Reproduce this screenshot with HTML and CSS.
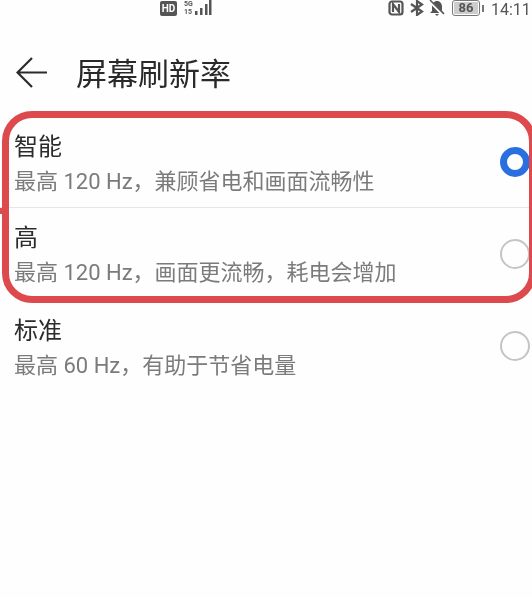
FILE: index.html
```html
<html lang="zh-CN">
  <head>
    <meta charset="UTF-8" />
    <meta name="viewport" content="width=device-width, initial-scale=1.0" />
    <title>屏幕刷新率</title>
    <link rel="stylesheet" href="styles.css">
  </head>

  <body>
    <div class="base">
      <div class="statusBar">
        <div class="statusLeft">
          <span class="hdBadge">HD</span>
          <svg class="signal" width="30" height="16" viewBox="0 0 30 16">
            <text x="2" y="6" class="signalText">5G</text>
            <text x="2" y="14" class="signalText">15</text>
            <rect x="13" y="11" width="2.500" height="4" />
            <rect x="18" y="8" width="2.500" height="7" />
            <rect x="23" y="4" width="2.500" height="11" />
            <rect x="27" y="0" width="2.500" height="15" />
          </svg>
        </div>
        <div class="statusRight">
          <svg class="statusIcon iconNfc" width="16" height="16" viewBox="0 0 16 16">
            <rect x="1.500" y="1.500" width="13" height="13" rx="2.500" fill="none" stroke="#555" stroke-width="2.200" />
            <path d="M5 12V4l6 8V4" fill="none" stroke="#555" stroke-width="2.200" />
          </svg>
          <svg class="statusIcon iconBluetooth" width="14" height="16" viewBox="0 0 14 16">
            <path d="M1 4l11 7.500-5 3.500V1l5 3.500L1 12" fill="none" stroke="#555" stroke-width="2.200" />
          </svg>
          <svg class="statusIcon iconBell" width="18" height="16" viewBox="0 0 18 16">
            <path d="M9 1C6 1 4 3.500 4 6.500V11l-2 2h14l-2-2V6.500C14 3.500 12 1 9 1z" fill="#555" />
            <path d="M7 14h4l-2 2z" fill="#555" />
            <path d="M2 1.500l14 14" stroke="#fff" stroke-width="3" />
            <path d="M2 0l14 14" stroke="#555" stroke-width="1.500" />
          </svg>
          <span class="battery"><span class="batteryLevel">86</span></span>
          <span class="batteryTip"></span>
          <span class="clock">14:11</span>
        </div>
      </div>

      <div class="header">
        <svg class="backIcon" width="32" height="32" viewBox="0 0 32 32">
          <path d="M16 1L1.500 15.500 16 30M1.500 15.500H31" fill="none" stroke="#2b2b2b" stroke-width="2.200" />
        </svg>
        <div class="headerTitle">屏幕刷新率</div>
      </div>

      <div class="list">
        <div class="row rowLine">
          <div class="rowText">
            <div class="rowTitle">智能</div>
            <div class="rowDesc">最高 120 Hz，兼顾省电和画面流畅性</div>
          </div>
          <span class="radio radioOn"></span>
        </div>
        <div class="row">
          <div class="rowText">
            <div class="rowTitle">高</div>
            <div class="rowDesc">最高 120 Hz，画面更流畅，耗电会增加</div>
          </div>
          <span class="radio"></span>
        </div>
        <div class="row rowLast">
          <div class="rowText">
            <div class="rowTitle">标准</div>
            <div class="rowDesc">最高 60 Hz，有助于节省电量</div>
          </div>
          <span class="radio"></span>
        </div>
        <div class="highlight"></div>
        <div class="highlightBump"></div>
      </div>
    </div>
  </body>
</html>
```

FILE: styles.css
```css
html,
body {
  margin: 0;
  height: 100%;
  overflow: hidden;
  background-color: #fefefe;
}

.base {
  position: relative;
  width: 532px;
  height: 598px;
  overflow: hidden;
  font-family: Roboto, "Noto Sans CJK SC", sans-serif;
  filter: blur(0.5px);
}

.statusBar {
  height: 16px;
  display: flex;
  justify-content: space-between;
  align-items: center;
  color: #555;
}

.statusLeft {
  display: flex;
  align-items: center;
  gap: 5px;
  margin-left: 160px;
}

.hdBadge {
  width: 17px;
  height: 15px;
  border-radius: 2px;
  background-color: #555;
  color: #fff;
  font-size: 10px;
  font-weight: 700;
  line-height: 15px;
  text-align: center;
}

.signal {
  fill: #555;
}

.signalText {
  font-size: 7px;
  font-weight: 700;
}

.statusRight {
  display: flex;
  align-items: center;
  height: 16px;
}

.iconNfc {
  margin-right: 6px;
}

.iconBluetooth {
  margin-right: 4px;
}

.iconBell {
  margin-right: 6px;
}

.battery {
  width: 28px;
  height: 16px;
  box-sizing: border-box;
  border: 1.500px solid #777;
  border-radius: 3px;
  display: flex;
  padding: 1px;
}

.batteryLevel {
  flex: 1;
  background-color: #ccc;
  font-size: 13px;
  font-weight: 700;
  line-height: 11px;
  text-align: center;
  color: #555;
}

.batteryTip {
  width: 2px;
  height: 7px;
  margin-left: 2px;
  background-color: #777;
}

.clock {
  align-self: flex-start;
  margin-left: 7px;
  width: 41px;
  font-size: 16px;
  line-height: 19px;
  white-space: nowrap;
}

.header {
  display: flex;
  align-items: center;
  height: 32px;
  margin-top: 41px;
  padding-left: 16px;
}

.backIcon {
  flex-shrink: 0;
}

.headerTitle {
  margin-left: 28px;
  padding-top: 3px;
  font-size: 31px;
  line-height: 32px;
  color: #2a2a2a;
}

.list {
  position: relative;
  margin-top: 27px;
}

.row {
  height: 91px;
  box-sizing: border-box;
  display: flex;
  align-items: center;
  justify-content: space-between;
  padding: 0 2px 0 14px;
}

.rowLine {
  height: 92px;
  border-bottom: 1px solid #e6e6e6;
}

.rowLast {
  margin-top: 1px;
}

.rowText {
  padding-top: 4px;
}

.rowLine .rowText,
.rowLast .rowText {
  padding-top: 6px;
}

.rowTitle {
  font-size: 24px;
  line-height: 30px;
  color: #2b2b2b;
}

.rowDesc {
  margin-top: 5px;
  font-size: 22px;
  line-height: 30px;
  color: #7b7b7b;
}

.radio {
  width: 30px;
  height: 30px;
  box-sizing: border-box;
  border: 2px solid #c4c4c4;
  border-radius: 50%;
}

.radioOn {
  border: 7px solid #2a6fdf;
}

.highlight {
  position: absolute;
  left: 2px;
  right: -4px;
  top: -5px;
  height: 192px;
  box-sizing: border-box;
  border: 7px solid #dd4a4e;
  border-radius: 30px;
}

.highlightBump {
  position: absolute;
  left: 0;
  top: 92px;
  width: 4px;
  height: 6px;
  background-color: #dd4a4e;
}
```
